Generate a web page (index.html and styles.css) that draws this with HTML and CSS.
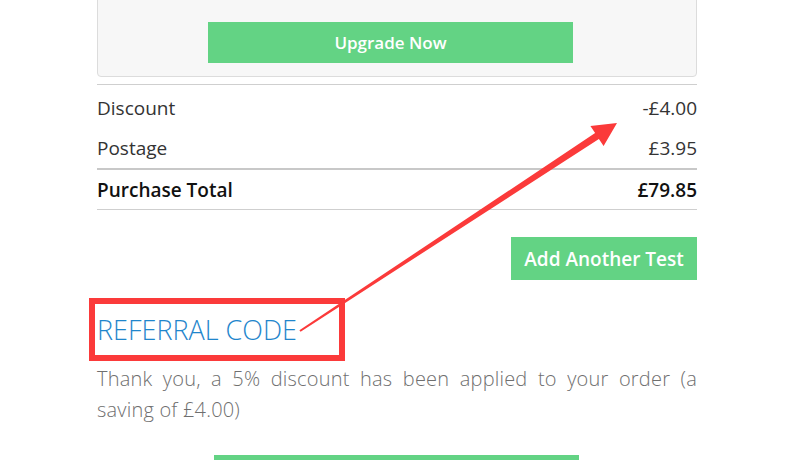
FILE: index.html
```html
<!DOCTYPE html>
<html lang="en">
<head>
<meta charset="utf-8">
<title>Basket</title>
<link rel="stylesheet" href="styles.css">
</head>
<body>
<div class="page">
  <div class="card">
    <p class="card-note">30%</p>
    <div class="card-action"><a class="btn btn-upgrade">Upgrade Now</a></div>
  </div>
  <div class="totals">
    <div class="row first"><span>Discount</span><span>-£4.00</span></div>
    <div class="row"><span>Postage</span><span>£3.95</span></div>
    <div class="row total"><span>Purchase Total</span><span>£79.85</span></div>
  </div>
  <div class="actions"><a class="btn btn-add">Add Another Test</a></div>
  <h2 class="ref-title">REFERRAL CODE</h2>
  <p class="ref-text">Thank you, a 5% discount has been applied to your order (a saving of £4.00)</p>
  <div class="next"><span class="next-bar"></span></div>
</div>
<div class="annotation">
  <span class="ann-box"></span>
  <svg class="ann-arrow" width="800" height="460" viewBox="0 0 800 460">
    <polygon fill="#fb3a3a" points="299.4,330.2 595.1,133.1 590.4,126 617,123 603.6,146 598.9,138.9 300.6,331.8"/>
  </svg>
</div>
</body>
</html>
```

FILE: styles.css
```css
* { box-sizing: border-box; }
html, body { margin: 0; padding: 0; background: #fff; }
body {
  width: 800px;
  height: 460px;
  overflow: hidden;
  position: relative;
  font-family: "Open Sans", "Noto Sans", sans-serif;
  color: #222;
}
.page {
  width: 600px;
  margin-left: 97px;
}
.card {
  margin-top: -30px;
  background: #f7f7f7;
  border: 1px solid #dcdcdc;
  border-radius: 4px;
  padding: 0 0 13px 0;
}
.card-note {
  margin: 0;
  height: 51px;
  padding-top: 8px;
  text-align: center;
  font-size: 18px;
  line-height: 25px;
  color: #555;
}
.card-action {
  padding-left: 110px;
}
.btn {
  display: flex;
  align-items: center;
  justify-content: center;
  background: #63d384;
  color: #fff;
  text-decoration: none;
}
.btn-upgrade {
  width: 365px;
  height: 41px;
  font-size: 17px;
  font-weight: 600;
}
.totals {
  margin-top: 7px;
  border-top: 1px solid #cfcfcf;
  border-bottom: 1px solid #cfcfcf;
}
.row {
  display: flex;
  justify-content: space-between;
  height: 40px;
  line-height: 40px;
  font-size: 19px;
  font-weight: 400;
  color: #333;
}
.row.first { margin-top: 3px; }
.row.total {
  border-top: 2px solid #c8c8c8;
  height: 41px;
  font-weight: 600;
  color: #111;
}
.actions {
  display: flex;
  justify-content: flex-end;
  margin-top: 27px;
}
.btn-add {
  width: 186px;
  height: 43px;
  font-size: 19px;
  font-weight: 600;
}
.ref-title {
  margin: 33px 0 0 0;
  font-size: 27px;
  line-height: 34px;
  font-weight: 300;
  color: #1f86cc;
}
.ref-text {
  margin: 16px 0 0 0;
  font-size: 20px;
  line-height: 31px;
  font-weight: 300;
  letter-spacing: 0.2px;
  color: #6f6f6f;
  text-align: justify;
}
.next {
  margin-top: 30px;
  padding-left: 117px;
}
.next-bar {
  display: block;
  width: 365px;
  height: 10px;
  background: #63d384;
}
.annotation {
  position: absolute;
  left: 0;
  top: 0;
  width: 800px;
  height: 460px;
  pointer-events: none;
}
.ann-box {
  position: absolute;
  left: 89px;
  top: 298px;
  width: 256px;
  height: 63px;
  border: 6px solid #fb3a3a;
}
.ann-arrow {
  position: absolute;
  left: 0;
  top: 0;
}
```
